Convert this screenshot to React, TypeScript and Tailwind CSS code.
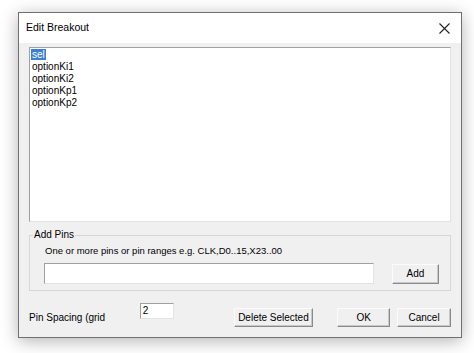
import React from 'react'

const items = ['sel', 'optionKi1', 'optionKi2', 'optionKp1', 'optionKp2']

function Btn({ label, className }: { label: string; className: string }) {
  return (
    <button
      className={
        'bg-[#f0f0f0] border border-t-[#fbfbfb] border-l-[#fbfbfb] border-r-[#8a8a8a] border-b-[#8a8a8a] shadow-[inset_-1px_-1px_0_#c8c8c8] text-[10px] text-black ' +
        className
      }
    >
      {label}
    </button>
  )
}

export default function App() {
  return (
    <div
      className="w-[474px] h-[353px] bg-white pt-[12px] pl-[18px]"
      style={{ fontFamily: '"Liberation Sans", Arial, sans-serif' }}
    >
      <div className="w-[444px] h-[326px] border border-[#707070] bg-[#f0f0f0] shadow-[0_3px_16px_rgba(0,0,0,0.3)] flex flex-col">
        {/* Title bar */}
        <div className="h-[30px] bg-white flex items-center justify-between pl-[7px] pr-[11px] shrink-0">
          <span className="text-[10.5px] text-black">Edit Breakout</span>
          <svg width="11" height="11" viewBox="0 0 11 11" className="mt-[1px]">
            <path d="M0.5 0.5 L10.5 10.5 M10.5 0.5 L0.5 10.5" stroke="#222" strokeWidth="1.1" fill="none" />
          </svg>
        </div>

        <div className="flex flex-col px-[10px] pt-[4px]">
          {/* Listbox */}
          <div className="w-[422px] h-[175px] bg-white border border-t-[#a0a0a0] border-l-[#a0a0a0] border-r-[#e3e3e3] border-b-[#e3e3e3] pl-[1px] pt-[1px]">
            {items.map((it, i) => (
              <div key={it} className="h-[12px] leading-[12px] text-[10px] text-black">
                <span className={i === 0 ? 'bg-[#3c7fd4] text-white px-[1px]' : 'px-[1px]'}>{it}</span>
              </div>
            ))}
          </div>

          {/* Add Pins group */}
          <fieldset className="w-[422px] h-[62px] mt-[7px] border border-[#d6d6d6] pl-[14px] pr-[11px]">
            <legend className="text-[10px] text-black ml-[-11px] px-[1px] leading-[12px]">Add Pins</legend>
            <div className="text-[9.5px] text-black leading-[12px] mt-[4px] ml-[1px]">
              One or more pins or pin ranges e.g. CLK,D0..15,X23..00
            </div>
            <div className="flex items-center justify-between mt-[6px]">
              <div className="w-[330px] h-[21px] bg-white border border-t-[#a0a0a0] border-l-[#a0a0a0] border-r-[#e3e3e3] border-b-[#e3e3e3]" />
              <Btn label="Add" className="w-[47px] h-[20px]" />
            </div>
          </fieldset>

          {/* Bottom row */}
          <div className="flex items-start mt-[12px]">
            <span className="text-[10px] text-black mt-[7px] w-[111px]">Pin Spacing (grid</span>
            <div className="w-[34px] h-[16px] bg-white border border-t-[#a0a0a0] border-l-[#a0a0a0] border-r-[#e3e3e3] border-b-[#e3e3e3] text-[10px] leading-[13px] pl-[2px]">
              2
            </div>
            <Btn label="Delete Selected" className="w-[80px] h-[19px] ml-[60px] mt-[5px]" />
            <Btn label="OK" className="w-[53px] h-[19px] ml-[24px] mt-[5px]" />
            <Btn label="Cancel" className="w-[54px] h-[19px] ml-[7px] mt-[5px]" />
          </div>
        </div>
      </div>
    </div>
  )
}
